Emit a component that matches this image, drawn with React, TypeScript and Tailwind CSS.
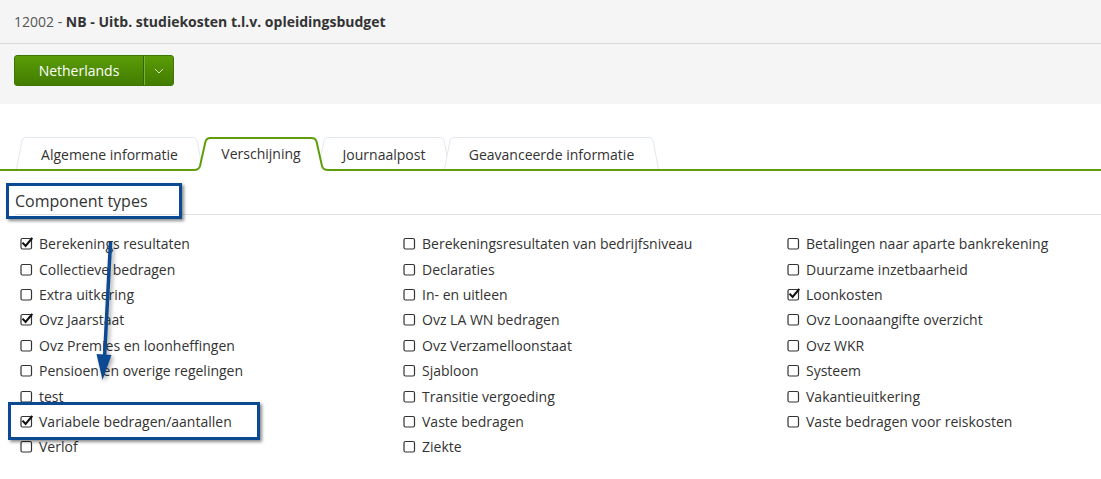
import React from "react";

const col1: [string, boolean][] = [
  ["Berekenings resultaten", true],
  ["Collectieve bedragen", false],
  ["Extra uitkering", false],
  ["Ovz Jaarstaat", true],
  ["Ovz Premies en loonheffingen", false],
  ["Pensioen en overige regelingen", false],
  ["test", false],
  ["Variabele bedragen/aantallen", true],
  ["Verlof", false],
];
const col2: [string, boolean][] = [
  ["Berekeningsresultaten van bedrijfsniveau", false],
  ["Declaraties", false],
  ["In- en uitleen", false],
  ["Ovz LA WN bedragen", false],
  ["Ovz Verzamelloonstaat", false],
  ["Sjabloon", false],
  ["Transitie vergoeding", false],
  ["Vaste bedragen", false],
  ["Ziekte", false],
];
const col3: [string, boolean][] = [
  ["Betalingen naar aparte bankrekening", false],
  ["Duurzame inzetbaarheid", false],
  ["Loonkosten", true],
  ["Ovz Loonaangifte overzicht", false],
  ["Ovz WKR", false],
  ["Systeem", false],
  ["Vakantieuitkering", false],
  ["Vaste bedragen voor reiskosten", false],
];

function Box({ checked }: { checked: boolean }) {
  return (
    <svg width="13" height="13" viewBox="0 0 13 13" className="shrink-0">
      <rect x="1" y="1.5" width="10.5" height="10.5" rx="1.5" fill="white" stroke="#333" strokeWidth="1.2" />
      {checked && (
        <path d="M3.2 6.4 L5.6 9 L11.6 1.8" fill="none" stroke="#111" strokeWidth="2.1" strokeLinecap="square" />
      )}
    </svg>
  );
}

function Column({ items }: { items: [string, boolean][] }) {
  return (
    <div className="flex flex-col">
      {items.map(([t, c]) => (
        <div key={t} className="flex items-center h-[25.4px] gap-[6px]">
          <Box checked={c} />
          <span className="text-[14px] text-[#333] whitespace-nowrap">{t}</span>
        </div>
      ))}
    </div>
  );
}

function InactiveTab({ label, width, ml }: { label: string; width: number; ml: string }) {
  return (
    <div className={`relative h-[32px] flex items-center justify-center ${ml}`} style={{ width }}>
      <svg className="absolute inset-0" width={width} height={32} viewBox={`0 0 ${width} 32`}>
        <path
          d={`M0.5 32 L6 3.5 Q6.7 0.5 10 0.5 L${width - 10} 0.5 Q${width - 6.7} 0.5 ${width - 6} 3.5 L${width - 0.5} 32`}
          fill="white"
          stroke="#e2e8ee"
          strokeWidth="1"
        />
      </svg>
      <span className="relative text-[14px] text-[#333] pt-[2px]">{label}</span>
    </div>
  );
}

function ActiveTab({ label, width, ml }: { label: string; width: number; ml: string }) {
  const w = width;
  const d = `M0 33 Q5 33 6 29 L11.5 4.5 Q12.5 1 16.5 1 L${w - 16.5} 1 Q${w - 12.5} 1 ${w - 11.5} 4.5 L${w - 6} 29 Q${w - 5} 33 ${w} 33`;
  return (
    <div className={`relative z-10 h-[34px] -mb-[2px] flex items-center justify-center ${ml}`} style={{ width }}>
      <svg className="absolute inset-0" width={w} height={34} viewBox={`0 0 ${w} 34`}>
        <path d={d + ` L${w} 34 L0 34 Z`} fill="white" stroke="none" />
        <path d={d} fill="none" stroke="#5f9d0c" strokeWidth="2" />
      </svg>
      <span className="relative text-[14px] text-[#333] pb-[1px]">{label}</span>
    </div>
  );
}

export default function App() {
  return (
    <div className="relative w-[1101px] h-[479px] bg-white overflow-hidden" style={{ fontFamily: "'Open Sans', 'Liberation Sans', sans-serif" }}>
      {/* header */}
      <div className="bg-[#f5f5f5]">
        <div className="h-[44px] flex items-center pl-[14px] border-b border-[#d9d9d9] text-[14px]">
          <span className="text-[#555]">12002 -&nbsp;</span>
          <span className="font-bold text-[#333]">NB - Uitb. studiekosten t.l.v. opleidingsbudget</span>
        </div>
        <div className="h-[60px] pt-[11px] pl-[14px]">
          <div className="flex h-[31px] w-[160px] rounded-[3px] border border-[#3f7504] bg-gradient-to-b from-[#5a9c07] to-[#437d01] text-white">
            <div className="w-[129px] flex items-center justify-center text-[14px] border-r border-[#346500]">
              Netherlands
            </div>
            <div className="flex-1 flex items-center justify-center border-l border-[#7bb03c]">
              <svg width="10" height="6" viewBox="0 0 10 6">
                <path d="M1 1 L5 5 L9 1" fill="none" stroke="#d8e8c4" strokeWidth="1" />
              </svg>
            </div>
          </div>
        </div>
      </div>

      {/* tabs */}
      <div className="pt-[33px]">
        <div className="flex items-end border-b-2 border-[#5f9d0c] h-[34px]">
          <InactiveTab label="Algemene informatie" width={187} ml="ml-[16px]" />
          <ActiveTab label="Verschijning" width={134} ml="-ml-[9px]" />
          <InactiveTab label="Journaalpost" width={132} ml="-ml-[10px]" />
          <InactiveTab label="Geavanceerde informatie" width={215} ml="-ml-[6px]" />
        </div>
      </div>

      {/* section heading */}
      <div className="ml-[15px] mt-[19px] border-b border-[#e3e3e3] pb-[2px]">
        <div className="text-[16px] leading-[22px] text-[#333]">Component types</div>
      </div>

      {/* checkbox grid */}
      <div className="grid grid-cols-[383px_384px_1fr] pl-[20px] pt-[16px]">
        <Column items={col1} />
        <Column items={col2} />
        <Column items={col3} />
      </div>

      {/* annotations */}
      <div className="absolute left-[6px] top-[183px] w-[176px] h-[36px] border-[3px] border-[#0b4a93] shadow-[2px_2px_3px_rgba(0,0,0,0.45)]" />
      <div className="absolute left-[8px] top-[402px] w-[252px] h-[38px] border-[3px] border-[#0b4a93] shadow-[2px_2px_3px_rgba(0,0,0,0.45)]" />
      <svg className="absolute left-0 top-0 pointer-events-none" width="200" height="400" viewBox="0 0 200 400" style={{ filter: "drop-shadow(2px 2px 2px rgba(0,0,0,0.35))" }}>
        <line x1="110.5" y1="242" x2="104.5" y2="358" stroke="#0b4a93" strokeWidth="3.5" />
        <path d="M96.5 354 L111.5 355 L102.5 380 Z" fill="#0b4a93" />
      </svg>
    </div>
  );
}
